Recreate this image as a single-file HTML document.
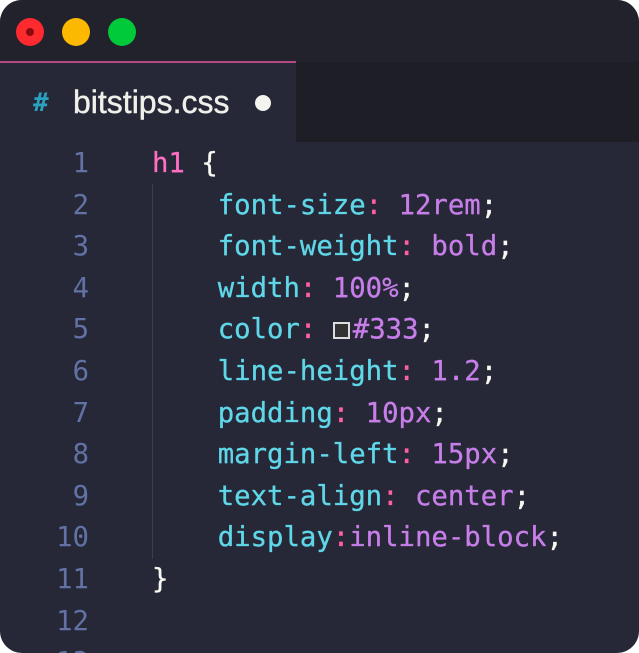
<!DOCTYPE html>
<html><head><style>
html,body{margin:0;padding:0;background:#fff;width:639px;height:653px;overflow:hidden}
.win{position:absolute;left:0;top:0;width:639px;height:653px;border-radius:22px;background:#262837;overflow:hidden}
.title{position:absolute;left:0;top:0;width:639px;height:62px;background:#21222c}
.dot{position:absolute;top:18px;width:28px;height:28px;border-radius:50%}
.tabline{position:absolute;left:0;top:61px;width:296px;height:2px;background:#b34a86}
.rtab{position:absolute;left:296px;top:62px;width:343px;height:80px;background:#1d1e26}
.tab{position:absolute;left:73px;top:84px;font:32px "Liberation Sans",sans-serif;color:#f0f0ea;white-space:pre;-webkit-text-stroke:0.4px #f0f0ea}
.hash{position:absolute;left:33px;top:88px;font:bold 26px "DejaVu Sans Mono",monospace;color:#2aa1c0}
.code{position:absolute;left:0;top:143px;font:27.3px/41.6px "DejaVu Sans Mono","Liberation Mono",monospace;white-space:pre}
.ln{position:absolute;left:0;width:89px;text-align:right;color:#6272a4}
.c{position:absolute;left:152px;-webkit-text-stroke:0.3px currentColor}
.p{color:#5fd7e8}.k{color:#ff5fa8}.v{color:#c77ee8}.w{color:#f8f8f2}.h{color:#ff6ec0}
.guide{position:absolute;left:152px;top:184px;width:1px;height:375px;background:#3c3e4c}
</style></head><body>
<div class="win">
<div class="title"></div>
<div class="dot" style="left:16px;background:#fe2a2f"><div style="position:absolute;left:10px;top:10px;width:8px;height:8px;border-radius:50%;background:#8a0a10"></div></div>
<div class="dot" style="left:62px;background:#fdb800"></div>
<div class="dot" style="left:108px;background:#00c93a"></div>
<div class="tabline"></div>
<div class="rtab"></div>
<div class="hash">#</div>
<div class="tab">bitstips.css</div>
<div style="position:absolute;left:255px;top:95px;width:16px;height:16px;border-radius:50%;background:#f4f4ee"></div>
<div class="guide"></div>
<div class="code">
<div class="ln" style="top:0">1</div><div class="c" style="top:0"><span class="h">h1</span> <span class="w">{</span></div>
<div class="ln" style="top:41.6px">2</div><div class="c" style="top:41.6px">    <span class="p">font-size</span><span class="k">:</span> <span class="v">12rem</span><span class="w">;</span></div>
<div class="ln" style="top:83.2px">3</div><div class="c" style="top:83.2px">    <span class="p">font-weight</span><span class="k">:</span> <span class="v">bold</span><span class="w">;</span></div>
<div class="ln" style="top:124.8px">4</div><div class="c" style="top:124.8px">    <span class="p">width</span><span class="k">:</span> <span class="v">100%</span><span class="w">;</span></div>
<div class="ln" style="top:166.4px">5</div><div class="c" style="top:166.4px">    <span class="p">color</span><span class="k">:</span> <span style="display:inline-block;width:17px;height:17px;border:2px solid #ddd;background:#333;box-sizing:border-box;vertical-align:-1px;margin-right:3px"></span><span class="v">#333</span><span class="w">;</span></div>
<div class="ln" style="top:208px">6</div><div class="c" style="top:208px">    <span class="p">line-height</span><span class="k">:</span> <span class="v">1.2</span><span class="w">;</span></div>
<div class="ln" style="top:249.6px">7</div><div class="c" style="top:249.6px">    <span class="p">padding</span><span class="k">:</span> <span class="v">10px</span><span class="w">;</span></div>
<div class="ln" style="top:291.2px">8</div><div class="c" style="top:291.2px">    <span class="p">margin-left</span><span class="k">:</span> <span class="v">15px</span><span class="w">;</span></div>
<div class="ln" style="top:332.8px">9</div><div class="c" style="top:332.8px">    <span class="p">text-align</span><span class="k">:</span> <span class="v">center</span><span class="w">;</span></div>
<div class="ln" style="top:374.4px">10</div><div class="c" style="top:374.4px">    <span class="p">display</span><span class="k">:</span><span class="v">inline-block</span><span class="w">;</span></div>
<div class="ln" style="top:416px">11</div><div class="c" style="top:416px"><span class="w">}</span></div>
<div class="ln" style="top:457.6px">12</div>
<div class="ln" style="top:499.2px">13</div>
</div>
</div>
</body></html>
